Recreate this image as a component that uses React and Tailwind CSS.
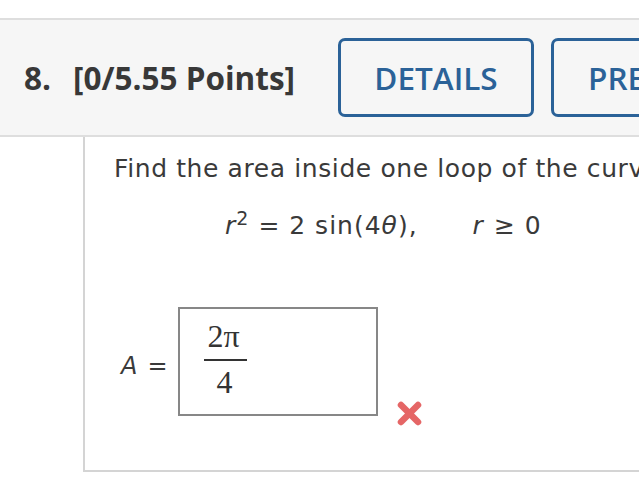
import React from "react";

const App = () => {
  return (
    <div className="w-[639px] h-[497px] bg-white overflow-hidden pt-[18px]">
      <div
        className="h-[119px] bg-[#f6f6f6] border-y-2 border-[#dedede] flex items-center whitespace-nowrap overflow-hidden"
        style={{ fontFamily: '"Open Sans", sans-serif' }}
      >
        <span className="ml-[24px] text-[31.5px] font-bold text-[#383838]">8.</span>
        <span className="ml-[22px] text-[31.5px] font-bold text-[#383838]">[0/5.55 Points]</span>
        <button className="ml-[43px] shrink-0 w-[196px] h-[79px] border-[3px] border-[#2b6298] rounded-[7px] text-[31.5px] font-semibold text-[#2b6298]">
          DETAILS
        </button>
        <button className="ml-[17px] shrink-0 w-[300px] h-[79px] border-[3px] border-[#2b6298] rounded-[7px] text-[31.5px] font-semibold text-[#2b6298] text-left pl-[34px]">
          PREVIOUS ANSWERS
        </button>
      </div>
      <div
        className="ml-[83px] h-[335px] border-l-2 border-b-2 border-[#d4d4d4] text-[#3a3a3a] whitespace-nowrap overflow-hidden"
        style={{ fontFamily: '"DejaVu Sans", Verdana, sans-serif' }}
      >
        <p className="pl-[29px] pt-[14px] text-[25px] leading-[36px] tracking-[0.6px]">Find the area inside one loop of the curve.</p>
        <p className="pl-[140px] mt-[13px] text-[25px] leading-[36px] tracking-[1px]">
          <span className="italic">r</span>
          <span className="text-[19px] align-[9px]">2</span>
          <span className="ml-[9px]">= 2 sin(4<span className="italic">θ</span>),</span>
          <span className="ml-[55px] italic">r</span>
          <span className="ml-[10px]">≥ 0</span>
        </p>
        <div className="flex items-start mt-[63px]">
          <div className="pl-[36px] pt-[41px] text-[24px] w-[93px] shrink-0">
            <span className="italic">A</span>
            <span className="ml-[10px]">=</span>
          </div>
          <div className="w-[200px] h-[109px] border-2 border-[#878787] shrink-0 pl-[24px] pt-[12px]">
            <div
              className="inline-flex flex-col items-center text-[32px] leading-[30px] text-[#333]"
              style={{ fontFamily: '"Liberation Serif", serif' }}
            >
              <span className="pb-[8px] pr-[4px]">2π</span>
              <span className="w-[43px] h-[2px] bg-[#333]"></span>
              <span className="pt-[6px] pr-[2px]">4</span>
            </div>
          </div>
          <svg className="ml-[18px] mt-[93px]" width="28" height="28" viewBox="0 0 28 28">
            <g stroke="#e35656" strokeWidth="6.5" strokeLinecap="round" opacity="0.9">
              <line x1="5" y1="5" x2="22" y2="22" />
              <line x1="22" y1="5" x2="5" y2="22" />
            </g>
          </svg>
        </div>
      </div>
    </div>
  );
};

export default App;
